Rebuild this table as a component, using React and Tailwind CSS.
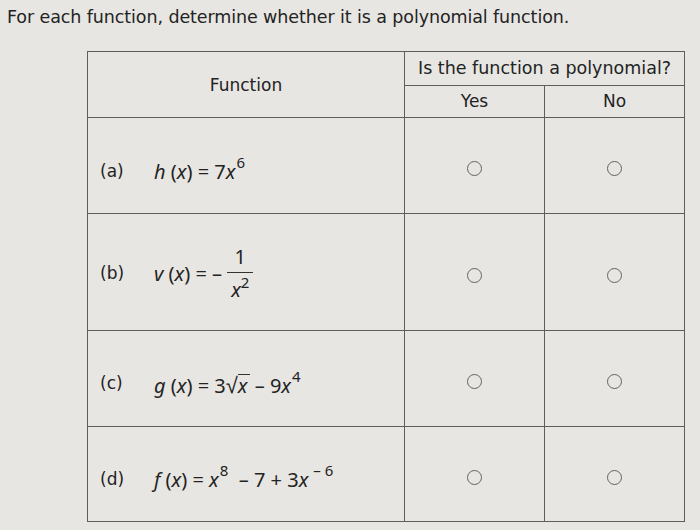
import React from "react";

const Radio = () => (
  <span className="inline-block w-[15px] h-[15px] rounded-full border-[1.5px] border-[#636363]" />
);

const V = ({ children }) => <span className="italic">{children}</span>;
const Sup = ({ children }) => (
  <span className="relative top-[-11px] text-[15px] ml-[1px]">{children}</span>
);

const rows = [
  {
    label: "(a)",
    h: "h-[96px]",
    pt: "pt-[12px]",
    expr: (
      <span>
        <V>h</V> (<V>x</V>) = 7<V>x</V>
        <Sup>6</Sup>
      </span>
    ),
  },
  {
    label: "(b)",
    h: "h-[117px]",
    pt: "pt-[3px]",
    expr: (
      <span className="inline-flex items-center">
        <span>
          <V>v</V> (<V>x</V>) = –&nbsp;
        </span>
        <span className="inline-flex flex-col items-center leading-none">
          <span className="pb-[5px] px-[4px]">1</span>
          <span className="block w-[26px] h-[1.5px] bg-[#333]" />
          <span className="pt-[7px]">
            <V>x</V>
            <span className="relative top-[-9px] text-[15px]">2</span>
          </span>
        </span>
      </span>
    ),
  },
  {
    label: "(c)",
    h: "h-[96px]",
    pt: "pt-[11px]",
    expr: (
      <span className="inline-flex items-baseline">
        <V>g</V>&nbsp;(<V>x</V>) = 3
        <span className="inline-flex items-baseline">
          <span className="text-[22px]">√</span>
          <span className="border-t-[1.5px] border-[#333] leading-[22px] pr-[2px]">
            <V>x</V>
          </span>
        </span>
        &nbsp;– 9<V>x</V>
        <Sup>4</Sup>
      </span>
    ),
  },
  {
    label: "(d)",
    h: "h-[95px]",
    pt: "pt-[12px]",
    expr: (
      <span>
        <V>f</V> (<V>x</V>) = <V>x</V>
        <Sup>8</Sup>&nbsp; – 7 + 3<V>x</V>
        <Sup>&nbsp;– 6</Sup>
      </span>
    ),
  },
];

export default function App() {
  return (
    <div className="w-[700px] h-[530px] bg-[#e7e6e2] text-[#232323] font-['DejaVu_Sans',sans-serif] overflow-hidden">
      <div className="pl-[7px] pt-[4px] text-[17.5px] leading-[26px] tracking-[-0.1px]">
        For each function, determine whether it is a polynomial function.
      </div>
      <table className="ml-[87px] mt-[21px] border-collapse w-[597px] table-fixed">
        <colgroup>
          <col className="w-[317px]" />
          <col className="w-[140px]" />
          <col className="w-[140px]" />
        </colgroup>
        <thead>
          <tr className="h-[34px]">
            <th
              rowSpan={2}
              className="border-[1.5px] border-[#5e5e5e] font-normal text-[17px] text-center pt-[2px]"
            >
              Function
            </th>
            <th
              colSpan={2}
              className="border-[1.5px] border-[#5e5e5e] font-normal text-[17.5px] text-center"
            >
              Is the function a polynomial?
            </th>
          </tr>
          <tr className="h-[32px]">
            <th className="border-[1.5px] border-[#5e5e5e] font-normal text-[17px] text-center">
              Yes
            </th>
            <th className="border-[1.5px] border-[#5e5e5e] font-normal text-[17px] text-center">
              No
            </th>
          </tr>
        </thead>
        <tbody>
          {rows.map((r) => (
            <tr key={r.label} className={r.h}>
              <td className="border-[1.5px] border-[#5e5e5e] align-middle">
                <div className={`flex items-center pl-[12px] ${r.pt}`}>
                  <span className="w-[54px] text-[17px]">{r.label}</span>
                  <span className="text-[20px] font-['Noto_Sans',sans-serif]">{r.expr}</span>
                </div>
              </td>
              <td className="border-[1.5px] border-[#5e5e5e] text-center align-middle">
                <div className="flex justify-center pt-[6px]">
                  <Radio />
                </div>
              </td>
              <td className="border-[1.5px] border-[#5e5e5e] text-center align-middle">
                <div className="flex justify-center pt-[6px]">
                  <Radio />
                </div>
              </td>
            </tr>
          ))}
        </tbody>
      </table>
    </div>
  );
}
